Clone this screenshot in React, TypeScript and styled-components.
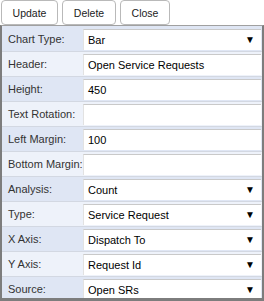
import React from 'react';
import styled, { createGlobalStyle } from 'styled-components';

type Field = {
  label: string;
  value: string;
  select?: boolean;
};

const fields: Field[] = [
  { label: 'Chart Type:', value: 'Bar', select: true },
  { label: 'Header:', value: 'Open Service Requests' },
  { label: 'Height:', value: '450' },
  { label: 'Text Rotation:', value: '' },
  { label: 'Left Margin:', value: '100' },
  { label: 'Bottom Margin:', value: '' },
  { label: 'Analysis:', value: 'Count', select: true },
  { label: 'Type:', value: 'Service Request', select: true },
  { label: 'X Axis:', value: 'Dispatch To', select: true },
  { label: 'Y Axis:', value: 'Request Id', select: true },
  { label: 'Source:', value: 'Open SRs', select: true },
];

const App = () => {
  return (
    <>
      <GlobalStyle />
      <Page>
        <Toolbar>
          <Button $width={57}>Update</Button>
          <Button $width={54}>Delete</Button>
          <Button $width={50}>Close</Button>
        </Toolbar>
        <Panel>
          {fields.map((f, i) => (
            <Row key={f.label} $alt={i % 2 === 1} $first={i === 0}>
              <Label>{f.label}</Label>
              <Box>
                <Value>{f.value}</Value>
                {f.select && <Arrow>▼</Arrow>}
              </Box>
            </Row>
          ))}
        </Panel>
      </Page>
    </>
  );
};

export default App;

const GlobalStyle = createGlobalStyle`
  body {
    margin: 0;
    background: #fff;
    font-family: "Liberation Sans", Arial, sans-serif;
  }
`;

const Page = styled.div`
  width: 264px;
  height: 301px;
  display: flex;
  flex-direction: column;
  overflow: hidden;
`;

const Toolbar = styled.div`
  display: flex;
  gap: 4px;
  padding-left: 1px;
  height: 25px;
  flex-shrink: 0;
`;

const Button = styled.button<{ $width: number }>`
  width: ${(p) => p.$width}px;
  height: 25px;
  padding: 0;
  border: 1px solid #b9b9b9;
  border-radius: 4px;
  background: #fff;
  font-family: "Liberation Sans", Arial, sans-serif;
  font-size: 10.5px;
  color: #222;
`;

const Panel = styled.div`
  flex: 1;
  min-height: 0;
  overflow: hidden;
  border: 2px solid #7d7d7d;
  border-top: 1px solid #a0a0a0;
  border-bottom-width: 3px;
  background: #dfe6f4;
  display: flex;
  flex-direction: column;
`;

const Row = styled.div<{ $alt: boolean; $first: boolean }>`
  height: 25px;
  flex-shrink: 0;
  box-sizing: border-box;
  display: flex;
  align-items: center;
  border-top: 1px solid ${(p) => (p.$first ? 'transparent' : '#d3d8e2')};
  background: ${(p) => (p.$alt ? '#eef2fa' : '#dfe6f4')};
`;

const Label = styled.div`
  width: 81px;
  padding-left: 6px;
  box-sizing: border-box;
  font-size: 11px;
  color: #333;
  white-space: nowrap;
`;

const Box = styled.div`
  flex: 1;
  height: 21px;
  box-sizing: border-box;
  margin-right: 1px;
  background: #fff;
  border-top: 1px solid #c9c9c9;
  border-left: 1px solid #e2e2e2;
  display: flex;
  align-items: center;
  padding: 0 6px 0 4px;
`;

const Value = styled.span`
  flex: 1;
  font-size: 11px;
  color: #000;
`;

const Arrow = styled.span`
  font-size: 10px;
  color: #000;
`;
